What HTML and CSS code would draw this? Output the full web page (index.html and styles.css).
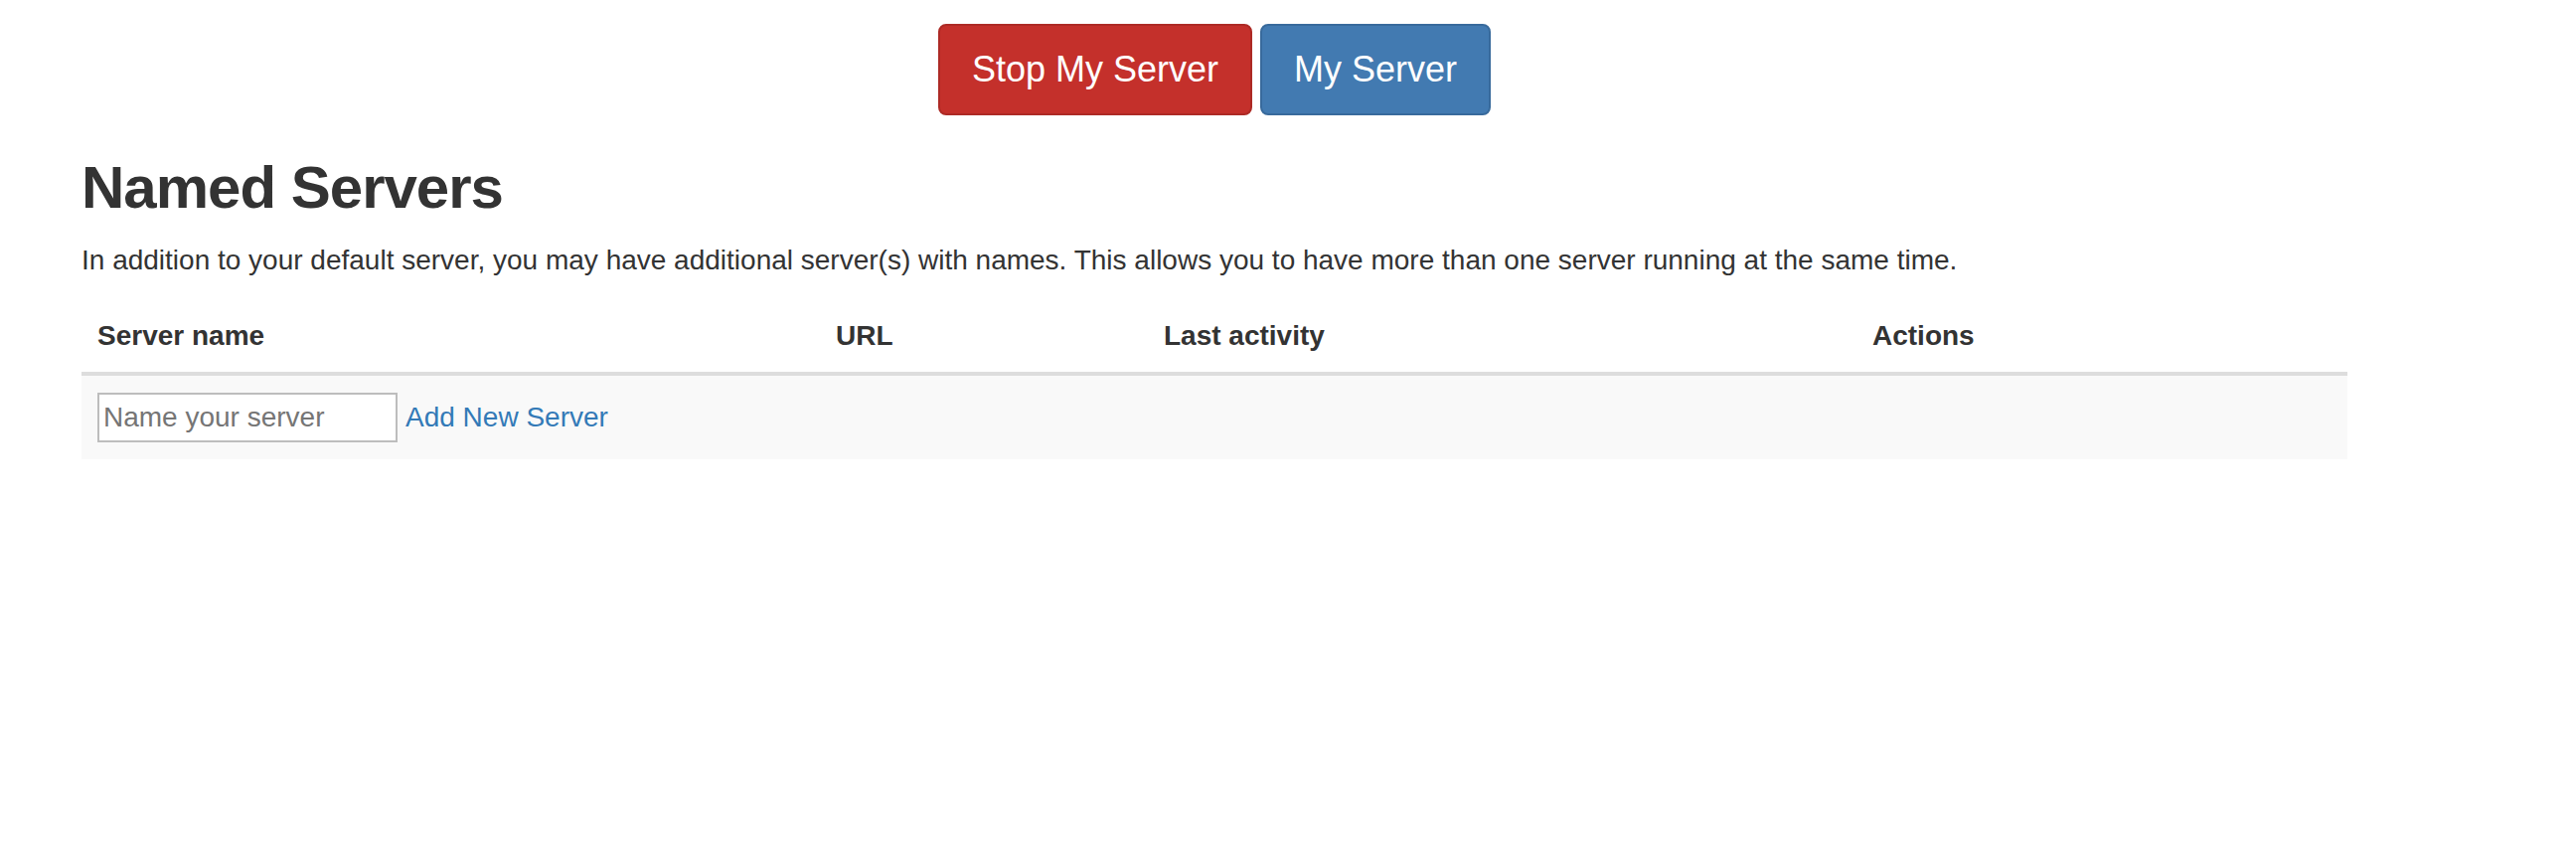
FILE: index.html
```html
<!DOCTYPE html>
<html lang="en">
<head>
<meta charset="utf-8">
<title>Home</title>
<link rel="stylesheet" href="styles.css">
</head>
<body>
<div class="container">
  <div class="server-actions">
    <a class="btn btn-danger" role="button">Stop My Server</a>
    <a class="btn btn-primary" role="button">My Server</a>
  </div>
  <h2 class="title">Named Servers</h2>
  <p class="intro">In addition to your default server, you may have additional server(s) with names. This allows you to have more than one server running at the same time.</p>
  <table class="server-table">
    <thead>
      <tr>
        <th class="col-name">Server name</th>
        <th class="col-url">URL</th>
        <th class="col-activity">Last activity</th>
        <th class="col-actions">Actions</th>
      </tr>
    </thead>
    <tbody>
      <tr class="add-server-row">
        <td colspan="4">
          <div class="add-server">
            <input class="new-server-name" type="text" placeholder="Name your server">
            <a class="new-server-btn" role="button">Add New Server</a>
          </div>
        </td>
      </tr>
    </tbody>
  </table>
</div>
</body>
</html>
```
FILE: styles.css
```css
html, body {
  margin: 0;
  padding: 0;
  background: #ffffff;
}

body {
  font-family: "Liberation Sans", Arial, Helvetica, sans-serif;
  font-size: 28px;
  line-height: 40px;
  color: #333333;
}

.container {
  margin-left: 82px;
  width: 2280px;
  padding-top: 24px;
}

.server-actions {
  display: flex;
  justify-content: center;
  gap: 8px;
}

.btn {
  display: inline-block;
  font-size: 36px;
  line-height: 48px;
  padding: 20px 32px;
  border: 2px solid transparent;
  border-radius: 8px;
  color: #ffffff;
  text-decoration: none;
  cursor: pointer;
}

.btn-danger {
  background: #c4302b;
  border-color: #ad2a25;
}

.btn-primary {
  background: #427ab1;
  border-color: #386a9c;
}

.title {
  font-size: 60px;
  line-height: 66px;
  font-weight: bold;
  letter-spacing: -1px;
  margin: 40px 0 20px 0;
  color: #333333;
}

.intro {
  margin: 0 0 20px 0;
}

.server-table {
  width: 2280px;
  border-collapse: collapse;
  table-layout: fixed;
}

.server-table th {
  text-align: left;
  font-weight: bold;
  padding: 16px;
  line-height: 40px;
  border-bottom: 4px solid #dddddd;
}

.col-name { width: 711px; }
.col-url { width: 298px; }
.col-activity { width: 681px; }
.col-actions { width: 462px; }

.add-server-row td {
  background: #f9f9f9;
  padding: 16px;
}

.add-server {
  display: flex;
  align-items: center;
  gap: 8px;
  height: 52px;
}

.new-server-name {
  box-sizing: border-box;
  width: 302px;
  height: 50px;
  margin: 0;
  padding: 0 4px;
  border: 2px solid #bdbdbd;
  background: #ffffff;
  font-family: "Liberation Sans", Arial, Helvetica, sans-serif;
  font-size: 28px;
  color: #333333;
}

.new-server-name::placeholder {
  color: #757575;
}

.new-server-btn {
  color: #337ab7;
  text-decoration: none;
  cursor: pointer;
}
```
